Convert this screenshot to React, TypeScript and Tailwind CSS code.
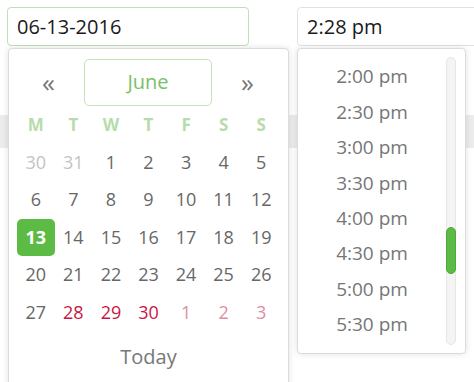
import React from 'react';

type Day = { n: number; tone: 'muted' | 'normal' | 'red' | 'pink' | 'selected' };

const weeks: Day[][] = [
  [
    { n: 30, tone: 'muted' },
    { n: 31, tone: 'muted' },
    { n: 1, tone: 'normal' },
    { n: 2, tone: 'normal' },
    { n: 3, tone: 'normal' },
    { n: 4, tone: 'normal' },
    { n: 5, tone: 'normal' },
  ],
  [6, 7, 8, 9, 10, 11, 12].map((n) => ({ n, tone: 'normal' as const })),
  [
    { n: 13, tone: 'selected' },
    ...[14, 15, 16, 17, 18, 19].map((n) => ({ n, tone: 'normal' as const })),
  ],
  [20, 21, 22, 23, 24, 25, 26].map((n) => ({ n, tone: 'normal' as const })),
  [
    { n: 27, tone: 'normal' },
    { n: 28, tone: 'red' },
    { n: 29, tone: 'red' },
    { n: 30, tone: 'red' },
    { n: 1, tone: 'pink' },
    { n: 2, tone: 'pink' },
    { n: 3, tone: 'pink' },
  ],
];

const toneClass: Record<Day['tone'], string> = {
  muted: 'text-[#c4c4c4]',
  normal: 'text-[#676767]',
  red: 'text-[#c8173f]',
  pink: 'text-[#dc8fa4]',
  selected: 'bg-[#5cbb45] text-white font-bold rounded-[5px]',
};

const times = ['2:00 pm', '2:30 pm', '3:00 pm', '3:30 pm', '4:00 pm', '4:30 pm', '5:00 pm', '5:30 pm'];

export default function App() {
  return (
    <div className="relative w-[474px] h-[382px] overflow-hidden bg-white font-['Open_Sans',sans-serif]">
      {/* Inputs */}
      <div className="flex gap-[48px] pl-[7px] pt-[7px]">
        <div className="w-[242px] h-[39px] shrink-0 flex items-center pl-[9px] rounded-[4px] border border-[#bde2b1] text-[20px] text-[#1a1a1a]">
          06-13-2016
        </div>
        <div className="w-[200px] h-[39px] shrink-0 flex items-center pl-[9px] rounded-[4px] border border-[#e2e2e2] text-[20px] text-[#1a1a1a]">
          2:28 pm
        </div>
      </div>

      {/* Page content behind the popups */}
      <div className="mt-[69px] h-[33px] bg-[#ececec]" />

      {/* Calendar popup */}
      <div className="absolute left-[8px] top-[48px] w-[281px] h-[345px] bg-white rounded-[4px] border border-[#dcdcdc] shadow-[0_0_6px_rgba(0,0,0,0.12)] px-[8px] pt-[9px]">
        <div className="flex items-center h-[48px]">
          <div className="w-[63px] flex justify-center text-[26px] leading-none text-[#777]">«</div>
          <div className="ml-[4px] w-[128px] h-[47px] flex items-center justify-center rounded-[5px] border border-[#c3e4b8] text-[20px] text-[#78c166]">
            June
          </div>
          <div className="ml-[4px] w-[63px] flex justify-center text-[26px] leading-none text-[#777]">»</div>
        </div>

        <div className="grid grid-cols-7 h-[37.5px] items-center text-center text-[17px] font-bold text-[#b7dcac]">
          {['M', 'T', 'W', 'T', 'F', 'S', 'S'].map((d, i) => (
            <div key={i}>{d}</div>
          ))}
        </div>

        {weeks.map((week, wi) => (
          <div key={wi} className="grid grid-cols-7 h-[37.5px] text-[18px]">
            {week.map((d, di) => (
              <div key={di} className={`flex items-center justify-center ${toneClass[d.tone]}`}>
                {d.n}
              </div>
            ))}
          </div>
        ))}

        <div className="h-[52px] flex items-center justify-center text-[20px] text-[#777]">Today</div>
      </div>

      {/* Time popup */}
      <div className="absolute left-[297px] top-[48px] w-[169px] h-[306px] bg-white rounded-[4px] border border-[#dcdcdc] shadow-[0_0_6px_rgba(0,0,0,0.12)] flex">
        <div className="flex-1 pt-[10px]">
          {times.map((t) => (
            <div key={t} className="h-[35.4px] flex items-center justify-center text-[19px] text-[#767676]">
              {t}
            </div>
          ))}
        </div>
        <div className="w-[10px] mt-[8px] mb-[8px] mr-[9px] rounded-full bg-[#f4f4f4] border border-[#e6e6e6] relative">
          <div className="absolute left-[-1px] right-[-1px] top-[169px] h-[47px] rounded-full bg-[#5cbb45] border border-[#4ea83a]" />
        </div>
      </div>
    </div>
  );
}
